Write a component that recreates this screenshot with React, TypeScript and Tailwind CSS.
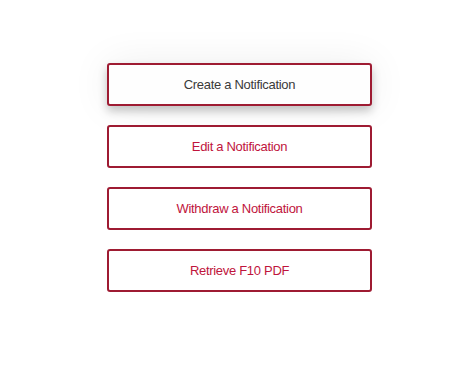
const items = [
  { label: "Create a Notification", active: true },
  { label: "Edit a Notification", active: false },
  { label: "Withdraw a Notification", active: false },
  { label: "Retrieve F10 PDF", active: false },
];

export default function App() {
  return (
    <div className="min-h-[367px] w-[474px] bg-white pt-[63px] font-['Liberation_Sans',Arial,sans-serif]">
      <div className="ml-[107px] flex w-[265px] flex-col gap-[19px]">
        {items.map((item) => (
          <button
            key={item.label}
            className={
              item.active
                ? "h-[43px] rounded-[3px] border-2 border-[#9e1b32] bg-[#fefefe] pt-px text-[13px] tracking-[-0.3px] text-[#3a3a3a] shadow-[0_5px_10px_rgba(0,0,0,0.22),0_0_40px_rgba(0,0,0,0.07)]"
                : "h-[43px] rounded-[3px] border-2 border-[#9e1b32] bg-white pt-px text-[13px] tracking-[-0.3px] text-[#c0143c]"
            }
          >
            {item.label}
          </button>
        ))}
      </div>
    </div>
  );
}
